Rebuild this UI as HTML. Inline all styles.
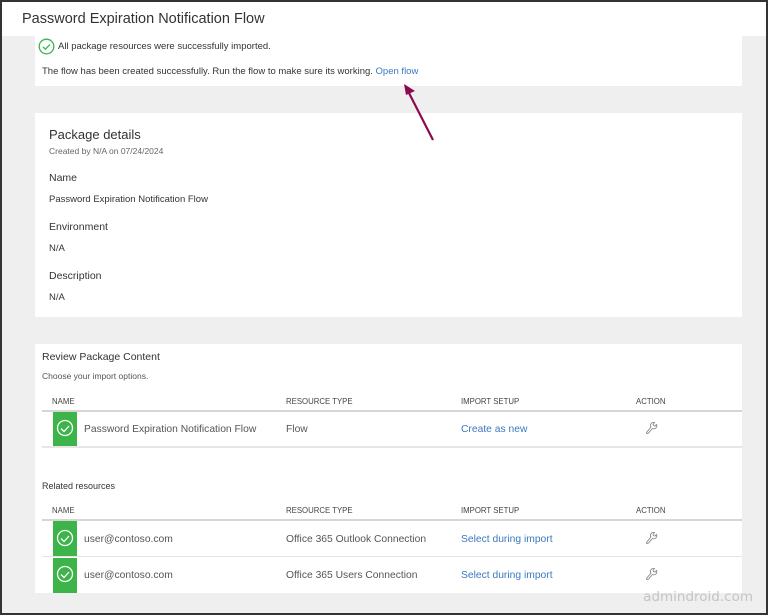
<!DOCTYPE html>
<html><head><style>
*{margin:0;padding:0;box-sizing:border-box}
body{width:768px;height:615px;overflow:hidden;font-family:"Liberation Sans",sans-serif;color:#333;background:#fff}
.frame{position:absolute;left:0;top:0;width:768px;height:615px;border:2px solid #333;background:#efefef}
.hdr{position:absolute;left:0;top:0;width:764px;height:34px;background:#fff}
.hdr span{position:absolute;left:20px;top:9px;font-size:14.5px;color:#333}
.p{position:absolute;left:33px;width:707px;background:#fff}
.t{position:absolute;white-space:nowrap}
.s10{font-size:9.5px}.s11{font-size:10.5px}
.r{font-size:10.3px;color:#555}
.blue{color:#3b79c2}
.line{position:absolute;left:7px;width:700px;height:2px;background:#d6d6d6}
.line1{position:absolute;left:7px;width:700px;height:1px;background:#e3e3e3}
.g{position:absolute;left:18px;width:24px;background:#3cb44a}
.cap{font-size:7.8px;color:#444}
</style></head><body>
<div class="frame">
<div class="hdr"><span>Password Expiration Notification Flow</span></div>
<div class="p" style="top:34px;height:50px">
 <svg class="t" style="left:3px;top:2px" width="17" height="17" viewBox="0 0 17 17"><circle cx="8.5" cy="8.5" r="7.3" fill="none" stroke="#3cb44a" stroke-width="1.3"/><path d="M5 8.8l2.4 2.4 4.6-4.8" fill="none" stroke="#3cb44a" stroke-width="1.3"/></svg>
 <div class="t s10" style="left:23px;top:5px">All package resources were successfully imported.</div>
 <div class="t s10" style="left:7px;top:30px">The flow has been created successfully. Run the flow to make sure its working. <span class="blue">Open flow</span></div>
</div>
<div class="p" style="top:111px;height:204px">
 <div class="t" style="left:14px;top:14px;font-size:13px">Package details</div>
 <div class="t" style="left:14px;top:33px;font-size:8.5px;color:#666">Created by N/A on 07/24/2024</div>
 <div class="t s11" style="left:14px;top:59px">Name</div>
 <div class="t s10" style="left:14px;top:81px">Password Expiration Notification Flow</div>
 <div class="t s11" style="left:14px;top:108px">Environment</div>
 <div class="t s10" style="left:14px;top:130px">N/A</div>
 <div class="t s11" style="left:14px;top:157px">Description</div>
 <div class="t s10" style="left:14px;top:179px">N/A</div>
</div>
<div class="p" style="top:342px;height:249px">
 <div class="t s11" style="left:7px;top:7px">Review Package Content</div>
 <div class="t" style="left:7px;top:27px;font-size:8.5px;color:#555">Choose your import options.</div>
 <div class="t cap" style="left:17px;top:53px">NAME</div><div class="t cap" style="left:251px;top:53px">RESOURCE TYPE</div><div class="t cap" style="left:426px;top:53px">IMPORT SETUP</div><div class="t cap" style="left:601px;top:53px">ACTION</div>
 <div class="line" style="top:66px"></div>
 <div class="g" style="top:68px;height:34px"></div>
 <div class="t r" style="left:49px;top:80px">Password Expiration Notification Flow</div><div class="t r" style="left:251px;top:80px">Flow</div><div class="t r blue" style="left:426px;top:80px">Create as new</div>
 <div class="line" style="top:102px;background:#e6e6e6"></div>
 <div class="t" style="left:7px;top:137px;font-size:9px">Related resources</div>
 <div class="t cap" style="left:17px;top:162px">NAME</div><div class="t cap" style="left:251px;top:162px">RESOURCE TYPE</div><div class="t cap" style="left:426px;top:162px">IMPORT SETUP</div><div class="t cap" style="left:601px;top:162px">ACTION</div>
 <div class="line" style="top:175px"></div>
 <div class="g" style="top:177px;height:35px"></div>
 <div class="t r" style="left:49px;top:190px">user@contoso.com</div><div class="t r" style="left:251px;top:190px">Office 365 Outlook Connection</div><div class="t r blue" style="left:426px;top:190px">Select during import</div>
 <div class="line1" style="top:212px"></div>
 <div class="g" style="top:214px;height:35px"></div>
 <div class="t r" style="left:49px;top:226px">user@contoso.com</div><div class="t r" style="left:251px;top:226px">Office 365 Users Connection</div><div class="t r blue" style="left:426px;top:226px">Select during import</div>
</div>
</div>
<svg style="position:absolute;left:0;top:0" width="768" height="615">
 <g fill="none" stroke="#fff" stroke-width="1.3">
  <circle cx="65" cy="428" r="7.5"/><path d="M61 428.5l3 3 5-5.5"/>
  <circle cx="65" cy="538" r="7.5"/><path d="M61 538.5l3 3 5-5.5"/>
  <circle cx="65" cy="574" r="7.5"/><path d="M61 574.5l3 3 5-5.5"/>
 </g>
 <g fill="none" stroke="#888" stroke-width="0.9">
  <path id="w" d="M647.5 433.5a1 1 0 0 1-1-1l4.5-5.5a3 3 0 0 1 3.5-4.5l-1.5 2 .8 1.2 1.2.3 1.5-1.5a3 3 0 0 1-4 4l-4 4.5z"/>
  <use href="#w" y="110"/><use href="#w" y="146"/>
 </g>
 <line x1="433" y1="140" x2="409" y2="93" stroke="#8b0a50" stroke-width="2.2"/>
 <path d="M404 84l11 7-9 4z" fill="#8b0a50"/>
 <text x="753" y="601" text-anchor="end" font-family="DejaVu Sans,sans-serif" font-size="13.5" fill="#c4c4c4">admindroid.com</text>
</svg>
</body></html>
